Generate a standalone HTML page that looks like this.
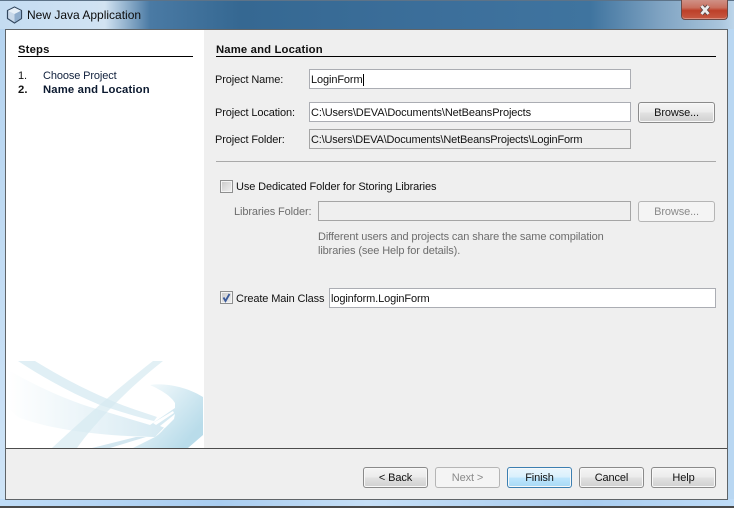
<!DOCTYPE html>
<html><head><meta charset="utf-8"><style>
html,body{margin:0;padding:0}
body{width:734px;height:508px;position:relative;overflow:hidden;background:#b9d7f2;font:11px/14px "Liberation Sans",sans-serif;letter-spacing:-.12px;color:#111}
div,span{position:absolute;box-sizing:border-box;white-space:nowrap}
.inp{background:#fff;border:1px solid #abadb3;height:20px;padding:3px 1px 0 1px}
.dis{background:#efefef;border:1px solid #a5a5a5;height:20px}
.btn{height:21px;border:1px solid #8a8a8a;border-radius:3px;background:linear-gradient(#f5f5f5 0,#ececec 45%,#e0e0e0 55%,#d0d0d0 100%);box-shadow:inset 0 0 0 1px #f8f8f8;text-align:center;line-height:20px}
.off{border-color:#b5b5b5;background:#f4f4f4;color:#8a8a8a;box-shadow:none}
.g{color:#6d6d6d}
.b{font-weight:bold;font-size:11.3px;letter-spacing:.15px}
.chk{width:13px;height:13px;border:1px solid #8e8f8f;background:linear-gradient(135deg,#c9c9c9,#f2f2f2);box-shadow:inset 0 0 0 1px #f4f4f4}
</style></head><body>
<div style="left:0;top:0;width:734px;height:29px;background:linear-gradient(90deg,#c4dcf1 0,#cfe2f3 90px,#d2e3f2 105px,#4a7aa4 150px,#356892 240px,#3c6f9b 450px,#3f749f 590px,#7fa3c2 660px,#a9c5dc 720px,#bcd5ea 734px)"></div>
<div style="left:0;top:0;width:734px;height:1px;background:#5d7388"></div>
<div style="left:0;top:29px;width:5px;height:474px;background:linear-gradient(#b5d4f0,#cfe4f7)"></div>
<div style="left:0;top:499px;width:734px;height:7px;background:linear-gradient(90deg,#bfdcf7,#a9cdf0 30%,#c6dff6 50%,#a9cdf0 80%,#bfdcf7)"></div>
<div style="left:0;top:506px;width:734px;height:2px;background:#4a4a4a"></div>

<svg style="position:absolute;left:6px;top:6px" width="17" height="18" viewBox="0 0 17 18"><path d="M8.500 1 15.500 4.500V12.500L8.500 17 1.500 12.500V4.500Z" fill="#c8d9ea" stroke="#33485f" stroke-width="1.200" stroke-linejoin="round"/><path d="M2 4.800 8.500 8 15 4.800 8.500 1.600Z" fill="#e6eff7"/><path d="M8.500 8 15 4.800V12.300L8.500 16.400Z" fill="#8fadcc"/></svg>
<span style="left:27px;top:8px;font-size:12px;color:#0c0c0c;letter-spacing:0">New Java Application</span>

<div style="left:681px;top:0;width:47px;height:20px;border:1px solid #6b4a47;border-top:0;border-radius:0 0 4px 4px;background:linear-gradient(#cf9186 0,#c9705f 40%,#bd4029 55%,#c75a43 100%);box-shadow:inset 0 -1px 0 #d98d7d"></div>
<svg style="position:absolute;left:698px;top:4px" width="14" height="12" viewBox="0 0 14 12"><path d="M3.500 2 10.500 10M10.500 2 3.500 10" stroke="#5a4442" stroke-width="4.400"/><path d="M3.500 2 10.500 10M10.500 2 3.500 10" stroke="#ececec" stroke-width="2.800"/></svg>

<div style="left:5px;top:29px;width:723px;height:471px;background:#efefef;border:1px solid #5f6468"></div>
<div style="left:6px;top:30px;width:198px;height:418px;background:#fff"></div>
<svg style="position:absolute;left:6px;top:361px" width="198" height="87" viewBox="0 0 198 87">
<defs><linearGradient id="a" gradientUnits="userSpaceOnUse" x1="2" y1="0" x2="170" y2="0"><stop offset="0" stop-color="#fff"/><stop offset="1" stop-color="#d3e8f1"/></linearGradient>
<linearGradient id="b" gradientUnits="userSpaceOnUse" x1="140" y1="25" x2="190" y2="70"><stop offset="0" stop-color="#f4fafc"/><stop offset="1" stop-color="#b9dcea"/></linearGradient></defs>
<path d="M2 9C32 26 62 40 94 49L144 64 169 47V55L149 76C100 75 50 70 14 57 10 55 5 50 2 46Z" fill="url(#a)"/>
<path d="M12 0H29C55 16 80 29 104 39 120 46 136 51 151 56L148 60C135 57 115 51 94 44 65 32 38 17 12 0Z" fill="#e0eff5"/>
<path d="M147 0H157C125 25 90 60 71 87H46C75 60 112 27 147 0Z" fill="#d6e9f1" opacity=".7"/>
<path d="M144 24C155 22 178 24 197 36V74L182 87H127L149 76C158 70 165 60 169 47V42C165 35 155 29 144 24Z" fill="url(#b)"/>
<path d="M167 50 147 62 150 64 168 52ZM169 53 154 65 159 67 168 58Z" fill="#fff"/>
<path d="M86 87 130 76H140L104 87Z" fill="#d3e7f0"/>
</svg>
<div style="left:6px;top:448px;width:721px;height:1px;background:#4c4c4c"></div>

<span class="b" style="left:18px;top:43px">Steps</span>
<div style="left:18px;top:56px;width:175px;height:1px;background:#000"></div>
<span style="left:18px;top:69px">1.</span><span style="left:43px;top:69px;color:#10203c">Choose Project</span>
<span class="b" style="left:18px;top:83px">2.</span><span class="b" style="left:43px;top:83px;color:#0c1a30">Name and Location</span>

<span class="b" style="left:216px;top:43px">Name and Location</span>
<div style="left:216px;top:56px;width:500px;height:1px;background:#000"></div>

<span style="left:215px;top:73px">Project Name:</span>
<div class="inp" style="left:309px;top:69px;width:322px">LoginForm<span style="position:static;border-left:1px solid #000"></span></div>
<span style="left:215px;top:106px">Project Location:</span>
<div class="inp" style="left:309px;top:102px;width:322px">C:\Users\DEVA\Documents\NetBeansProjects</div>
<div class="btn" style="left:638px;top:102px;width:77px">Browse...</div>
<span style="left:215px;top:133px">Project Folder:</span>
<div class="dis" style="left:309px;top:129px;width:322px;padding:3px 1px 0 1px;letter-spacing:-.18px">C:\Users\DEVA\Documents\NetBeansProjects\LoginForm</div>
<div style="left:216px;top:161px;width:500px;height:1px;background:#a9a9a9"></div>

<div class="chk" style="left:220px;top:180px"></div>
<span style="left:236px;top:180px">Use Dedicated Folder for Storing Libraries</span>
<span class="g" style="left:234px;top:205px">Libraries Folder:</span>
<div class="dis" style="left:318px;top:201px;width:313px"></div>
<div class="btn off" style="left:638px;top:201px;width:77px">Browse...</div>
<span class="g" style="left:318px;top:230px">Different users and projects can share the same compilation</span>
<span class="g" style="left:318px;top:244px">libraries (see Help for details).</span>

<div class="chk" style="left:220px;top:291px"></div>
<svg style="position:absolute;left:220px;top:291px" width="13" height="13" viewBox="0 0 13 13"><path d="M3.500 6.500 5.500 10 9.500 3" fill="none" stroke="#3a5a9a" stroke-width="1.800"/></svg>
<span style="left:236px;top:292px">Create Main Class</span>
<div class="inp" style="left:329px;top:288px;width:387px">loginform.LoginForm</div>

<div class="btn" style="left:363px;top:467px;width:65px">&lt; Back</div>
<div class="btn off" style="left:435px;top:467px;width:65px">Next &gt;</div>
<div class="btn" style="left:507px;top:467px;width:65px;border-color:#3c7fb1;background:linear-gradient(#eaf6fd 0,#d9f0fc 48%,#bee6fd 52%,#a7d9f5 100%)">Finish</div>
<div class="btn" style="left:579px;top:467px;width:65px">Cancel</div>
<div class="btn" style="left:651px;top:467px;width:65px">Help</div>
</body></html>
